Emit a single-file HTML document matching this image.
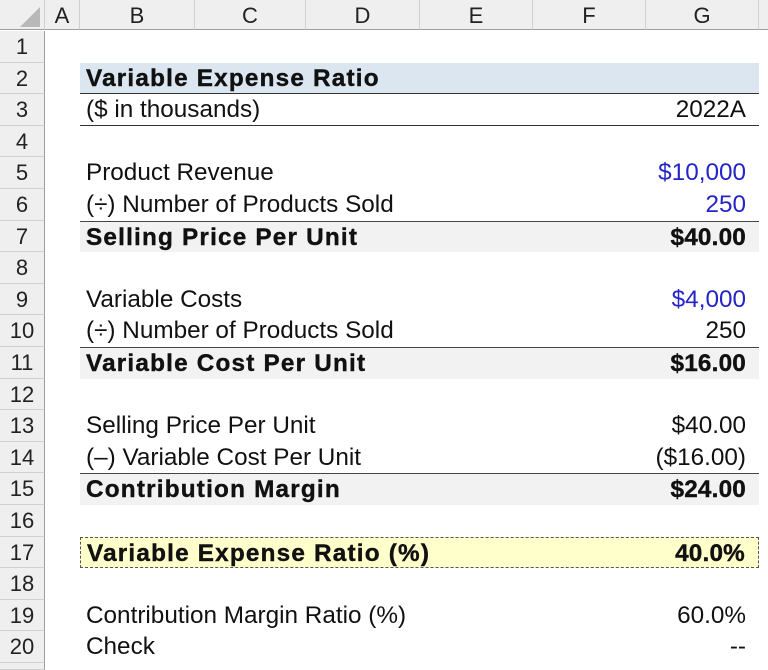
<!DOCTYPE html>
<html style="margin:0;width:768px;height:670px;overflow:hidden"><head><style>
body{margin:0;width:768px;height:670px;overflow:hidden;background:#fff;font-family:"Liberation Sans",Arial,sans-serif;position:relative}
.a{position:absolute}
.ch{top:0;height:30px;background:#efefef;border-right:1px solid #d0d0d0;border-bottom:1px solid #9e9e9e;font-size:22px;text-align:center;line-height:31px;color:#222;box-sizing:border-box}
.rh{left:0;width:45px;background:#efefef;border-right:1px solid #9e9e9e;border-bottom:1px solid #d0d0d0;font-size:22px;text-align:center;color:#222;box-sizing:border-box}
.row{left:80px;width:679px;font-size:24.3px;color:#111;box-sizing:border-box}
.l{position:absolute;left:6px;white-space:nowrap}
.r{position:absolute;right:13px;white-space:nowrap}
.b{font-weight:bold;letter-spacing:1.2px;-webkit-text-stroke:0.4px #111}
.r.b{letter-spacing:0.2px}
.blue{color:#2424c8}
</style></head><body>
<div class="a ch" style="left:0;width:45px"><div class="a" style="left:20px;top:7px;width:0;height:0;border-left:20px solid transparent;border-bottom:20px solid #b8b8b8"></div></div>
<div class="a ch" style="left:45px;width:35px">A</div>
<div class="a ch" style="left:80px;width:115px">B</div>
<div class="a ch" style="left:195px;width:111px">C</div>
<div class="a ch" style="left:306px;width:114px">D</div>
<div class="a ch" style="left:420px;width:113px">E</div>
<div class="a ch" style="left:533px;width:113px">F</div>
<div class="a ch" style="left:646px;width:113px">G</div>
<div class="a ch" style="left:759px;width:9px;border-right:none"></div>
<div id="rows"></div>
<script>
var d=[
[2,'<span class="l b">Variable Expense Ratio</span>','background:#dce6f1;border-bottom:1px solid #333'],
[3,'<span class="l">($ in thousands)</span><span class="r">2022A</span>','border-bottom:1px solid #333'],
[5,'<span class="l">Product Revenue</span><span class="r blue">$10,000</span>',''],
[6,'<span class="l">(÷) Number of Products Sold</span><span class="r blue">250</span>',''],
[7,'<span class="l b">Selling Price Per Unit</span><span class="r b">$40.00</span>','background:#f2f2f2;border-top:1px solid #444'],
[9,'<span class="l">Variable Costs</span><span class="r blue">$4,000</span>',''],
[10,'<span class="l">(÷) Number of Products Sold</span><span class="r">250</span>',''],
[11,'<span class="l b">Variable Cost Per Unit</span><span class="r b">$16.00</span>','background:#f2f2f2;border-top:1px solid #444'],
[13,'<span class="l">Selling Price Per Unit</span><span class="r">$40.00</span>',''],
[14,'<span class="l">(–) Variable Cost Per Unit</span><span class="r">($16.00)</span>',''],
[15,'<span class="l b">Contribution Margin</span><span class="r b">$24.00</span>','background:#f2f2f2;border-top:1px solid #444'],
[17,'<span class="l b">Variable Expense Ratio (%)</span><span class="r b">40.0%</span>','background:#ffffcc;border:1px dashed #555'],
[19,'<span class="l">Contribution Margin Ratio (%)</span><span class="r">60.0%</span>',''],
[20,'<span class="l">Check</span><span class="r">--</span>','']
];
var h='';
for(var i=1;i<=21;i++){var t=31+(i-1)*31.6;var hh=Math.min(31.6,670-t);h+='<div class="a rh" style="top:'+t+'px;height:'+hh+'px;line-height:31px;overflow:hidden">'+(i<=20?i:'')+'</div>';}
d.forEach(function(x){var t=31+(x[0]-1)*31.6;h+='<div class="a row" style="top:'+t+'px;height:31.6px;line-height:31px;'+x[2]+'">'+x[1]+'</div>';});
document.getElementById('rows').innerHTML=h;
</script>
</body></html>
